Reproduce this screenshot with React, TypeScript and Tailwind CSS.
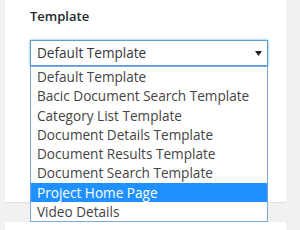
const options = [
  "Default Template",
  "Bacic Document Search Template",
  "Category List Template",
  "Document Details Template",
  "Document Results Template",
  "Document Search Template",
  "Project Home Page",
  "Video Details",
];

export default function App() {
  const selected = 6;
  return (
    <div className="h-[230px] w-[300px] overflow-hidden bg-[#f1f1f1] font-['Open_Sans',sans-serif]">
      <div className="ml-[5px] mr-[14px] h-[202px] bg-white pl-[25px] pt-[7px] shadow-[0_1px_1px_rgba(0,0,0,0.06)]">
        <div className="text-[13px] font-semibold leading-[18px] text-[#23282d]">Template</div>
        <div className="relative mt-[15px] w-[238px]">
          <div className="flex h-[26px] items-center justify-between border border-[#5b9dd9] pl-[6px] pr-[5px] text-[13.6px] text-[#32373c] shadow-[0_0_2px_rgba(30,140,190,0.8)]">
            <span>Default Template</span>
            <svg width="7" height="5" viewBox="0 0 7 5" className="mt-[1px]">
              <path d="M0 0h7L3.5 5z" fill="#222" />
            </svg>
          </div>
          <ul className="absolute left-0 top-full z-10 w-full border border-[#7aa7e3] bg-white text-[13.6px]">
            {options.map((o, i) => (
              <li
                key={o}
                className={
                  i === selected
                    ? "h-[19.25px] bg-[#1e90ff] pl-[6px] leading-[19.25px] text-white"
                    : "h-[19.25px] pl-[6px] leading-[19.25px] text-[#444]"
                }
              >
                {o}
              </li>
            ))}
          </ul>
        </div>
      </div>
      <div className="ml-[5px] mr-[14px] mt-[20px] h-[30px] bg-white shadow-[0_1px_1px_rgba(0,0,0,0.06)]" />
    </div>
  );
}
